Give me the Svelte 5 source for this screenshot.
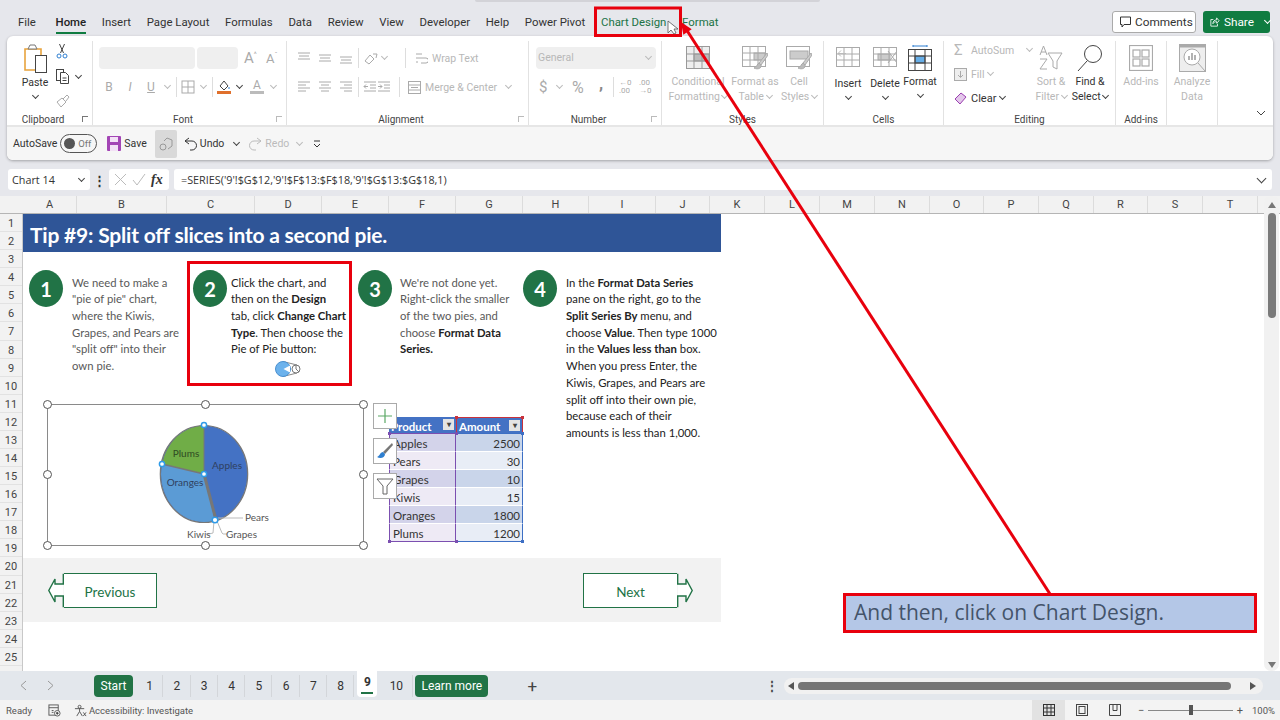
<script lang="ts">
	const tabs = ['File', 'Home', 'Insert', 'Page Layout', 'Formulas', 'Data', 'Review', 'View', 'Developer', 'Help', 'Power Pivot', 'Chart Design', 'Format'];
	const columns: [string, number][] = [['A', 54], ['B', 90], ['C', 88], ['D', 67], ['E', 67], ['F', 67], ['G', 67], ['H', 66], ['I', 67], ['J', 54], ['K', 55], ['L', 55], ['M', 55], ['N', 55], ['O', 54], ['P', 55], ['Q', 55], ['R', 54], ['S', 55], ['T', 55]];
	const rows = Array.from({ length: 25 }, (_, i) => i + 1);
	const sheets = ['1', '2', '3', '4', '5', '6', '7', '8', '9', '10'];
	const tableRows: [string, number][] = [['Apples', 2500], ['Pears', 30], ['Grapes', 10], ['Kiwis', 15], ['Oranges', 1800], ['Plums', 1200]];
	const vAlign = ['M1 2h12M2 5h10M1 8h12', 'M1 4h12M2 7h10M1 10h12', 'M1 6h12M2 9h10M1 12h12'];
	const hAlign = ['M1 2h12M1 5h8M1 8h12M1 11h8', 'M1 2h12M3 5h8M1 8h12M3 11h8', 'M1 2h12M5 5h8M1 8h12M5 11h8'];
	const rangeMarks: [number, number, string][] = [
		[0, 16, '#7b4fb0'], [67, 16, '#7b4fb0'], [0, 124, '#7b4fb0'], [67, 124, '#7b4fb0'],
		[67, 0, '#c8323c'], [133, 0, '#c8323c'], [133, 16, '#3d6fc4'], [133, 124, '#3d6fc4']
	];
</script>

<div class="app">
	<div class="title-sliver"></div>
	<nav class="tabs">
		{#each tabs as t}
			<span class="tab" class:first={t === 'File'} class:active={t === 'Home'} class:ctx={t === 'Chart Design' || t === 'Format'}>{t}</span>
		{/each}
		<div class="tab-actions">
			<button class="comments">
				<svg width="11" height="12" viewBox="0 0 11 12" fill="none" stroke="#333"><path d="M.5 1h10v7.500H4L2 11V8.500H.5z" /></svg>
				Comments
			</button>
			<button class="share">
				<svg width="12" height="12" viewBox="0 0 12 12" fill="none" stroke="#fff"><path d="M4 3H1v8h8V8M3.500 8c0-3 2-4.500 4.500-4.500V1l3 3.500L8 7.500V5.500C6 5.500 4.500 6.500 3.500 8z" /></svg>
				Share <span class="c share-caret"></span>
			</button>
		</div>
	</nav>

	<section class="ribbon-card">
		<div class="ribbon">
			<div class="group g-clip">
				<div class="g-body clip">
					<div class="paste">
						<svg width="24" height="30" viewBox="0 0 24 30" fill="none"><path d="M12 27H2V6h16v6" stroke="#e8a33d" stroke-width="1.6" /><path d="M5 6l2-4h5l2 4z" fill="#fff" stroke="#777" /><rect x="12.500" y="12.500" width="11" height="17" fill="#fff" stroke="#444" /></svg>
						<span class="paste-label">Paste</span>
						<span class="c dark"></span>
					</div>
					<div class="mini-col">
						<svg width="12" height="16" viewBox="0 0 12 16" fill="none" stroke="#444"><path d="M3.500 1l4 9M8.500 1l-4 9" /><circle cx="3" cy="13" r="2" stroke="#2f7fd0" /><circle cx="9" cy="13" r="2" stroke="#2f7fd0" /></svg>
						<span class="copy">
							<svg width="14" height="15" viewBox="0 0 14 15" fill="none" stroke="#444"><rect x=".5" y=".5" width="7" height="11" /><path d="M4.500 3.500h5l3 3v8h-8z" fill="#fff" /><path d="M6.500 9h4M6.500 11.500h4" /></svg>
							<span class="c dark"></span>
						</span>
						<svg width="14" height="14" viewBox="0 0 14 14" fill="none" stroke="#aaa"><path d="M1 8l4 5 5-5-4-4zM7 5l4-4 2 2-3 4" /></svg>
					</div>
				</div>
				<div class="g-label launch">Clipboard<i class="launcher"></i></div>
			</div>

			<div class="group g-font">
				<div class="g-body font-body">
					<div class="g-row">
						<span class="select w96"></span>
						<span class="select w41"></span>
						<span class="big-a">A<sup>^</sup></span>
						<span class="big-a small">A<sup>ˇ</sup></span>
					</div>
					<div class="font-row">
						<span>B</span><span class="ital">I</span><span class="und">U</span><span class="c"></span>
						<span class="vsep"></span>
						<svg width="14" height="14" viewBox="0 0 14 14" fill="none" stroke="#aaa"><rect x="1" y="1" width="12" height="12" /><path d="M7 1v12M1 7h12" /></svg>
						<span class="c"></span>
						<span class="vsep"></span>
						<span class="color-a"><svg width="14" height="11" viewBox="0 0 14 11" fill="none" stroke="#444"><path d="M3 6l4-5 4 5-4 4z" /><path d="M12 7v2" stroke="#2f7fd0" /></svg><em class="orange"></em></span>
						<span class="c dark"></span>
						<span class="color-a">A<em class="grey"></em></span>
						<span class="c"></span>
					</div>
				</div>
				<div class="g-label launch">Font<i class="launcher faint"></i></div>
			</div>

			<div class="group g-align">
				<div class="g-body align-body">
					<div class="g-row tight">
						{#each vAlign as d}
							<svg class="ic" width="14" height="14" viewBox="0 0 14 14" stroke="#aaa"><path {d} /></svg>
						{/each}
						<span class="vsep ml5"></span>
						<svg class="ml5" width="14" height="14" viewBox="0 0 14 14" fill="none" stroke="#aaa"><path d="M1 10l5-6 4 4-5 5zM9 3l4 0-1 4" /></svg>
						<span class="c ml4"></span>
						<span class="vsep ml18"></span>
						<svg class="ml9" width="13" height="14" viewBox="0 0 13 14" fill="none" stroke="#aaa"><path d="M1 3h6M1 7h10a2.500 2.500 0 010 5H6M1 11h2" /></svg>
						<span class="wrap-label">Wrap Text</span>
					</div>
					<div class="g-row tight">
						{#each hAlign as d}
							<svg class="ic" width="14" height="14" viewBox="0 0 14 14" stroke="#aaa"><path {d} /></svg>
						{/each}
						<span class="vsep ml5"></span>
						<svg class="ml4" width="14" height="14" viewBox="0 0 14 14" fill="none" stroke="#aaa"><path d="M1 2h12M7 5h6M7 8h6M1 11h12M5 6.500H1l2-2M1 6.500l2 2" /></svg>
						<svg class="ic" width="14" height="14" viewBox="0 0 14 14" fill="none" stroke="#aaa"><path d="M1 2h12M7 5h6M7 8h6M1 11h12M1 6.500h4l-2-2M5 6.500l-2 2" /></svg>
						<span class="vsep ml8"></span>
						<svg class="ml8" width="13" height="13" viewBox="0 0 13 13" fill="none" stroke="#aaa"><rect x=".5" y=".5" width="12" height="12" /><path d="M3 6.500h7M.5 4h12M.5 9h12" /></svg>
						<span class="wrap-label">Merge &amp; Center</span>
						<span class="c ml9"></span>
					</div>
				</div>
				<div class="g-label launch">Alignment<i class="launcher faint"></i></div>
			</div>

			<div class="group g-num">
				<div class="g-body num-body">
					<span class="general">General<span class="c"></span></span>
					<div class="num-row">
						<span class="dollar">$</span><span class="c ml6"></span><span class="pctsign">%</span><span class="comma">,</span>
						<span class="vsep ml8"></span>
						<span class="tiny ml5">←0<br />.00</span><span class="tiny ml6">.00<br />→0</span>
					</div>
				</div>
				<div class="g-label launch">Number<i class="launcher faint"></i></div>
			</div>

			<div class="group g-styles">
				<div class="g-body styles">
					<div class="big s1">
						<span class="ico"><svg width="24" height="25" viewBox="0 0 24 25" stroke="#999"><rect x=".5" y=".5" width="23" height="22" fill="#eee" /><rect x="8" y="8" width="15" height="7" fill="#bbb" /><path d="M.5 8h23M.5 15h23M8 .5v22M16 .5v22" fill="none" /></svg></span>
						<span>Conditional<br />Formatting <span class="c"></span></span>
					</div>
					<div class="big s2">
						<span class="ico"><svg width="26" height="25" viewBox="0 0 26 25" stroke="#aaa"><rect x=".5" y=".5" width="23" height="20" fill="none" /><rect x="12" y="7" width="11" height="7" fill="#ccc" /><path d="M.5 7h23M.5 14h23M8 .5v20M16 .5v20" fill="none" /><path d="M25 7l-8 10 2 2 7-10z" fill="#ccc" /><path d="M17 17c-2 1-2 4-5 5 4 2 8 0 7-3z" fill="#bbb" /></svg></span>
						<span>Format as<br />Table <span class="c"></span></span>
					</div>
					<div class="big s3">
						<span class="ico"><svg width="26" height="25" viewBox="0 0 26 25" stroke="#aaa"><rect x=".5" y=".5" width="23" height="20" fill="none" /><rect x="4" y="5" width="18" height="8" fill="#ccc" /><path d="M25 7l-8 10 2 2 7-10z" fill="#ccc" /><path d="M17 17c-2 1-2 4-5 5 4 2 8 0 7-3z" fill="#bbb" /></svg></span>
						<span>Cell<br />Styles <span class="c"></span></span>
					</div>
				</div>
				<div class="g-label">Styles</div>
			</div>

			<div class="group g-cells">
				<div class="g-body cells">
					<div class="big strong c1">
						<span class="ico low"><svg width="24" height="20" viewBox="0 0 24 20" fill="none" stroke="#aaa"><rect x=".5" y=".5" width="23" height="19" /><path d="M.5 7h23M.5 13h23M8 .5v19M16 .5v19" /><path d="M10 6.500H2l3-3M2 6.500l3 3" stroke="#bbb" /></svg></span>
						<span>Insert</span><span class="c dark ch"></span>
					</div>
					<div class="big strong c2">
						<span class="ico low"><svg width="24" height="20" viewBox="0 0 24 20" fill="none" stroke="#aaa"><rect x=".5" y=".5" width="23" height="19" /><rect x="5" y="7" width="12" height="6" fill="#ccc" /><path d="M8 .5v19M16 .5v19M.5 7h23M.5 13h23M15 4l9 12M24 4l-9 12" /></svg></span>
						<span>Delete</span><span class="c dark ch"></span>
					</div>
					<div class="big strong c3 up">
						<span class="ico"><svg width="24" height="26" viewBox="0 0 24 26" fill="none" stroke="#444"><path d="M5 1h14M5 0v2M19 0v2" stroke="#2f7fd0" /><rect x=".5" y="4.500" width="23" height="21" /><rect x="7" y="11" width="10" height="7" fill="#66aee8" /><path d="M.5 11h23M.5 18h23M7 4.500v21M17 4.500v21" /></svg></span>
						<span>Format</span><span class="c dark ch"></span>
					</div>
				</div>
				<div class="g-label">Cells</div>
			</div>

			<div class="group g-edit">
				<div class="g-body editing">
					<div class="edit-col">
						<span class="muted"><span class="sigma">Σ</span>AutoSum<span class="c ml9"></span></span>
						<span class="muted"><svg width="13" height="13" viewBox="0 0 13 13" fill="#eee" stroke="#aaa"><rect x=".5" y=".5" width="12" height="12" /><path d="M6.500 3v6M4 7l2.500 2.500L9 7" fill="none" /></svg>Fill <span class="c"></span></span>
						<span class="strong-line"><svg width="13" height="13" viewBox="0 0 13 13" fill="#e3c7ea" stroke="#9a3fb0"><path d="M1 7l6-6 5 4-6 7z" /></svg>Clear <span class="c dark"></span></span>
					</div>
					<div class="big up e1">
						<span class="ico"><svg width="24" height="26" viewBox="0 0 24 26" fill="none" stroke="#aaa"><path d="M1 10L4.500 1 8 10M2 7h5M1 14h7l-7 10h7M9 8h14l-5 8v8l-4-2v-6z" /></svg></span>
						<span>Sort &amp;<br />Filter <span class="c"></span></span>
					</div>
					<div class="big strong up e2">
						<span class="ico"><svg width="26" height="28" viewBox="0 0 26 28" fill="none" stroke="#444"><circle cx="16" cy="10" r="8.500" /><path d="M10 17L1 27" /></svg></span>
						<span>Find &amp;<br />Select <span class="c dark"></span></span>
					</div>
				</div>
				<div class="g-label">Editing</div>
			</div>

			<div class="group g-small">
				<div class="g-body"><div class="big up solo">
					<span class="ico"><svg width="24" height="26" viewBox="0 0 24 26" fill="none" stroke="#aaa" stroke-width="1.200"><rect x=".5" y=".5" width="23" height="25" /><rect x="4" y="5" width="7" height="7" /><rect x="13" y="5" width="7" height="7" /><rect x="4" y="14" width="7" height="7" /><rect x="13" y="14" width="7" height="7" /></svg></span>
					<span>Add-ins</span>
				</div></div>
				<div class="g-label">Add-ins</div>
			</div>

			<div class="group g-small">
				<div class="g-body"><div class="big up solo">
					<span class="ico"><svg width="27" height="30" viewBox="0 0 27 30" fill="#eee" stroke="#aaa"><rect x=".5" y="1.500" width="26" height="27" /><path d="M.5 3h26" stroke-width="3" /><circle cx="13" cy="14" r="8" fill="#fff" /><path d="M10 17v-4M13 17v-7M16 17v-5" stroke="#999" stroke-width="1.500" /><path d="M19 20l7 8" fill="none" /></svg></span>
					<span>Analyze<br />Data</span>
				</div></div>
				<div class="g-label"></div>
			</div>
			<svg class="collapse" width="10" height="6" viewBox="0 0 10 6" fill="none" stroke="#444"><path d="M1 1l4 4 4-4" /></svg>
		</div>

		<div class="qat">
			<span>AutoSave</span>
			<span class="toggle ml3"><i></i>Off</span>
			<svg class="ml10" width="14" height="15" viewBox="0 0 14 15"><rect width="14" height="15" rx="1" fill="#a345b5" /><rect x="3" y="1" width="8" height="5" fill="#f3e1f6" /><rect x="3" y="9" width="8" height="6" fill="#f3e1f6" /></svg>
			<span class="ml3">Save</span>
			<span class="qat-shape ml8"><svg width="14" height="14" viewBox="0 0 14 14" fill="none" stroke="#999"><path d="M5 4l3-3 5 2v6l-4 3" /><circle cx="4" cy="10" r="3" /></svg></span>
			<svg class="ml7" width="13" height="14" viewBox="0 0 13 14" fill="none" stroke="#333"><path d="M1 4l4-3M1 4l4 3M1 4h7a4 4 0 010 9H6" /></svg>
			<span class="ml3">Undo</span><span class="c dark ml10"></span>
			<svg class="ml10" width="13" height="14" viewBox="0 0 13 14" fill="none" stroke="#bbb"><path d="M12 4L8 1M12 4L8 7M12 4H5a4 4 0 000 9h2" /></svg>
			<span class="off ml3">Redo</span><span class="c ml8"></span>
			<svg class="ml11" width="8" height="8" viewBox="0 0 8 8" fill="none" stroke="#333"><path d="M1 1h6M1 4l3 3 3-3" /></svg>
		</div>
	</section>

	<div class="formula-bar">
		<span class="name-box">Chart 14<span class="c dark"></span></span>
		<span class="fdots">⋮</span>
		<span class="fx">
			<svg width="13" height="13" viewBox="0 0 13 13" stroke="#bbb" fill="none"><path d="M1 1l11 11M12 1L1 12" /></svg>
			<svg width="14" height="13" viewBox="0 0 14 13" stroke="#bbb" fill="none"><path d="M1 7l4 5 8-11" /></svg>
			<em>fx</em>
		</span>
		<span class="formula">=SERIES('9'!$G$12,'9'!$F$13:$F$18,'9'!$G$13:$G$18,1)<span class="c dark big-c"></span></span>
	</div>

	<div class="workbook">
		<div class="col-head">
			<span class="corner"></span>
			{#each columns as [name, w]}
				<span class="col" style="width:{w}px">{name}</span>
			{/each}
		</div>
		<div class="sheet-wrap">
			<div class="row-head">
				{#each rows as r}<span>{r}</span>{/each}
			</div>
			<div class="sheet">
				<h1 class="banner">Tip #9: Split off slices into a second pie.</h1>
				<div class="steps">
					<div class="step s-one"><span class="num">1</span><p>We need to make a "pie of pie" chart, where the Kiwis, Grapes, and Pears are "split off" into their own pie.</p></div>
					<div class="step s-two"><span class="num">2</span><div><p class="dark">Click the chart, and then on the <b>Design</b><br />tab, click <b>Change Chart Type</b>. Then choose the Pie of Pie button:</p>
						<svg class="pop" width="26" height="16" viewBox="0 0 26 16" fill="none"><path d="M8 .5l14 3.500M8 15.500l14-3.500" stroke="#888" /><circle cx="21" cy="8" r="4" fill="#fff" stroke="#777" /><path d="M21 8V4M21 8l3 3" stroke="#777" /><circle cx="8" cy="8" r="7.500" fill="#6cb2ec" stroke="#4a90d0" /><path d="M8.500 8l6.500-3.500v7z" fill="#fff" /></svg>
					</div></div>
					<div class="step s-three"><span class="num">3</span><p>We're not done yet. Right-click the smaller of the two pies, and choose <b>Format Data Series.</b></p></div>
					<div class="step s-four"><span class="num">4</span><p class="dark">In the <b>Format Data Series</b> pane on the right, go to the <b>Split Series By</b> menu, and choose <b>Value</b>. Then type 1000 in the <b>Values less than</b> box. When you press Enter, the Kiwis, Grapes, and Pears are split off into their own pie, because each of their<br />amounts is less than 1,000.</p></div>
				</div>

				<div class="chart-row">
					<div class="chart">
						<svg width="315" height="140" viewBox="1 1 315 140">
							<g transform="translate(157 70)">
								<ellipse rx="43.700" ry="48.500" fill="#4472c4" />
								<path d="M0 0V-48.500A43.700 48.500 0 0 0 -42 -10Z" fill="#70ad47" />
								<path d="M0 0L-42 -10A43.700 48.500 0 0 0 11 47Z" fill="#5b9bd5" />
								<path d="M0 0L12 46" stroke="#777" stroke-width="3" />
								<path d="M0 0L-42 -10" stroke="#777" stroke-width="1.400" />
								<path d="M0 0V-48.500" stroke="#777" stroke-width="1" />
								<ellipse rx="43.700" ry="48.500" fill="none" stroke="#777" stroke-width="1.200" />
							</g>
							<path d="M171 114h25M167 117l-1 12-4 1h-3M170 117l5 12 1 1h4" fill="none" stroke="#bbb" />
							<circle cx="157" cy="70" r="2.600" fill="#fff" stroke="#2f9be8" stroke-width="1.500" />
							<circle cx="157" cy="21" r="2.600" fill="#fff" stroke="#2f9be8" stroke-width="1.500" />
							<circle cx="115" cy="60" r="2.600" fill="#fff" stroke="#2f9be8" stroke-width="1.500" />
							<circle cx="168" cy="116" r="2.800" fill="#fff" stroke="#2f9be8" stroke-width="1.500" />
							<text x="180" y="65" class="on-pie" text-anchor="middle">Apples</text>
							<text x="139" y="53" class="on-pie2" text-anchor="middle">Plums</text>
							<text x="138" y="82" class="on-pie" text-anchor="middle">Oranges</text>
							<text x="198" y="117" class="lbl">Pears</text>
							<text x="140" y="134" class="lbl">Kiwis</text>
							<text x="179" y="134" class="lbl">Grapes</text>
						</svg>
						{#each ['tl', 'tc', 'tr', 'ml', 'mr', 'bl', 'bc', 'br'] as h}<i class="handle {h}"></i>{/each}
					</div>
					<div class="chart-tools">
						<span><svg width="16" height="16" viewBox="0 0 16 16" stroke="#5aa865" stroke-width="1.200"><path d="M8 1v14M1 8h14" /></svg></span>
						<span><svg width="18" height="18" viewBox="0 0 18 18"><path d="M16 1L7 10l2 2 8-9z" fill="#777" /><path d="M7 10c-3 0-3 4-6 5 3 2 8 1 8-3z" fill="#2f7fd0" /></svg></span>
						<span><svg width="18" height="18" viewBox="0 0 18 18" fill="none" stroke="#666"><path d="M1 2h16l-6 7v8H7V9z" /></svg></span>
					</div>
					<div class="table-wrap">
						<table>
							<thead><tr><th class="t-prod">Product<i>▾</i></th><th class="t-amt">Amount<i>▾</i></th></tr></thead>
							<tbody>
								{#each tableRows as [name, amount]}
									<tr><td class="p">{name}</td><td class="n">{amount}</td></tr>
								{/each}
							</tbody>
						</table>
						{#each rangeMarks as [x, y, color]}
							<i class="mark" style="left:{x - 1.500}px;top:{y - 1.500}px;background:{color}"></i>
						{/each}
					</div>
				</div>

				<div class="nav-band">
					<div class="nav-btn">
						<svg width="16" height="35" viewBox="0 0 16 35" fill="#fff" stroke="#217346" stroke-width="1.400"><path d="M15.300.7V11H7V6L.8 17.500 7 29v-6h8.300v11.300" /></svg>
						<span class="nav-body left">Previous</span>
					</div>
					<div class="nav-btn">
						<span class="nav-body right">Next</span>
						<svg width="16" height="35" viewBox="0 0 16 35" fill="#fff" stroke="#217346" stroke-width="1.400"><path d="M.7.700V11H9V6l6.200 11.500L9 29v-6H.7v11.300" /></svg>
					</div>
				</div>
			</div>
		</div>

		<div class="v-scroll">
			<svg width="8" height="6" viewBox="0 0 8 6"><path d="M4 0l4 6H0z" fill="#777" /></svg>
			<i></i>
			<svg class="down" width="8" height="6" viewBox="0 0 8 6"><path d="M4 6L8 0H0z" fill="#777" /></svg>
		</div>

		<div class="sheet-tabs">
			<svg class="arrow" width="7" height="11" viewBox="0 0 7 11" fill="none" stroke="#999"><path d="M6 1L1 5.500 6 10" /></svg>
			<svg class="arrow" width="7" height="11" viewBox="0 0 7 11" fill="none" stroke="#999"><path d="M1 1l5 4.500L1 10" /></svg>
			<span class="pill start">Start</span>
			{#each sheets as s}
				<span class="sheet-tab" class:current={s === '9'} class:ten={s === '10'}>{s}</span>
			{/each}
			<span class="pill more">Learn more</span>
			<span class="plus">+</span>
			<span class="sdots">⋮</span>
			<div class="h-scroll">
				<svg width="6" height="8" viewBox="0 0 6 8"><path d="M0 4l6-4v8z" fill="#555" /></svg>
				<i></i>
				<svg width="6" height="8" viewBox="0 0 6 8"><path d="M6 4L0 0v8z" fill="#555" /></svg>
			</div>
		</div>
	</div>

	<footer class="status">
		<span>Ready</span>
		<svg width="13" height="13" viewBox="0 0 14 14" fill="none" stroke="#555"><rect x="1" y="1" width="10" height="11" /><path d="M1 4h10M4 7h2M4 9h2" /><circle cx="10" cy="10" r="3" fill="#fff" /><circle cx="10" cy="10" r="1" fill="#333" /></svg>
		<span class="acc"><svg width="13" height="13" viewBox="0 0 14 14" fill="none" stroke="#555"><circle cx="6" cy="3" r="1.600" /><path d="M1 5h10M6 5v3l-3 5M6 8l3 5M10 9l3 4M13 9l-3 4" /></svg>Accessibility: Investigate</span>
		<div class="views">
			<span class="view on"><svg width="12" height="12" viewBox="0 0 12 12" fill="none" stroke="#333"><rect x=".5" y=".5" width="11" height="11" /><path d="M4 .5v11M8 .5v11M.5 4h11M.5 8h11" /></svg></span>
			<span class="view"><svg width="12" height="12" viewBox="0 0 12 12" fill="none" stroke="#444"><rect x=".5" y=".5" width="11" height="11" /><rect x="3" y="2.500" width="6" height="7" /></svg></span>
			<span class="view"><svg width="12" height="12" viewBox="0 0 12 12" fill="none" stroke="#444"><path d="M.5.5h11v11H.5zM4 .5v6h4v-6" /></svg></span>
		</div>
		<div class="zoom"><span>−</span><div class="zoom-track"><i></i></div><span>+</span></div>
		<span class="pct">100%</span>
	</footer>

	<!-- tutorial annotations drawn on top of the window -->
	<svg class="annot" width="1280" height="720" viewBox="0 0 1280 720">
		<path d="M1050 594L686 29" stroke="#e8000d" stroke-width="3" fill="none" />
		<path d="M681 22l10.700 7.300-8.400 5.400z" fill="#e8000d" />
		<rect x="595.500" y="8" width="85" height="27.500" fill="none" stroke="#e8000d" stroke-width="3" />
		<rect x="188.500" y="262.500" width="162" height="122" fill="none" stroke="#e8000d" stroke-width="3" />
		<path d="M668 21l0 12 3-3 3 4 2-1-2-4h4z" fill="#fff" stroke="#555" stroke-width=".8" />
	</svg>
	<div class="callout">And then, click on Chart Design.</div>
</div>

<style>
	:global(body) {
		margin: 0;
		background: #e6e7ec;
	}

	.app {
		position: relative;
		width: 1280px;
		height: 720px;
		overflow: hidden;
		background: #e6e7ec;
		font-family: Roboto, 'Noto Sans', sans-serif;
		font-size: 12px;
		color: #333;
		display: flex;
		flex-direction: column;
	}

	.title-sliver {
		position: absolute;
		left: 475px;
		top: 0;
		width: 345px;
		height: 2px;
		background: #d3d3d8;
		border-radius: 0 0 3px 3px;
	}

	.ml3 { margin-left: 3px; }
	.ml4 { margin-left: 4px; }
	.ml5 { margin-left: 5px; }
	.ml6 { margin-left: 6px; }
	.ml7 { margin-left: 7px; }
	.ml8 { margin-left: 8px; }
	.ml9 { margin-left: 9px; }
	.ml10 { margin-left: 10px; }
	.ml11 { margin-left: 11px; }
	.ml18 { margin-left: 18px; }

	.tabs {
		height: 36px;
		flex: none;
		display: flex;
		align-items: flex-start;
		padding: 8px 0 0 18px;
		gap: 15.700px;
		box-sizing: border-box;
	}

	.tab {
		position: relative;
		height: 28px;
		font-size: 11.400px;
		color: #333;
		line-height: 28px;
		white-space: nowrap;
	}

	.tab.first {
		margin-right: 4px;
	}

	.tab.active {
		font-weight: 500;
		color: #222;
	}

	.tab.active::after {
		content: '';
		position: absolute;
		left: 0;
		right: 0;
		bottom: 2px;
		height: 2px;
		background: #107c41;
	}

	.tab.ctx {
		color: #217346;
	}

	.tab-actions {
		margin-left: auto;
		display: flex;
		gap: 7px;
		margin-right: 10px;
		margin-top: 3px;
	}

	button {
		font: inherit;
		height: 22px;
		border-radius: 3px;
		display: flex;
		align-items: center;
		gap: 4px;
		padding: 0 0 0 7px;
		font-size: 11.800px;
	}

	.comments {
		width: 84px;
		background: #fff;
		border: 1px solid #aaa;
		color: #333;
	}

	.share {
		width: 67px;
		background: #107c41;
		border: 0;
		color: #fff;
	}

	.c.share-caret {
		margin-left: 7px;
	}

	.ribbon-card {
		margin: 0 7px;
		height: 124px;
		flex: none;
		background: #fff;
		border-radius: 6px;
		box-shadow: 0 1px 3px rgba(0, 0, 0, 0.3);
		overflow: hidden;
		display: flex;
		flex-direction: column;
	}

	.ribbon {
		height: 91px;
		flex: none;
		position: relative;
		display: flex;
		padding-top: 5px;
		box-sizing: border-box;
		border-bottom: 2px solid #e6e6e6;
		font-size: 10.5px;
	}

	.group {
		display: flex;
		flex-direction: column;
		border-right: 1px solid #e2e2e2;
		box-sizing: border-box;
	}

	.g-clip { width: 86px; }
	.g-font { width: 194px; }
	.g-align { width: 242px; }
	.g-num { width: 133px; }
	.g-styles { width: 162px; }
	.g-cells { width: 120px; }
	.g-edit { width: 172px; }
	.g-small { width: 51px; }

	.g-body {
		flex: 1;
		min-height: 0;
		display: flex;
	}

	.g-label {
		position: relative;
		height: 13px;
		font-size: 10px;
		line-height: 15px;
		text-align: center;
		color: #444;
	}

	.g-label.launch {
		padding-right: 13px;
	}

	.launcher {
		position: absolute;
		right: 4px;
		top: 4px;
		width: 5px;
		height: 5px;
		border-left: 1px solid #777;
		border-top: 1px solid #777;
	}

	.launcher.faint {
		border-color: #bbb;
	}

	/* chevron used all over the ribbon */
	.c {
		display: inline-block;
		flex: none;
		width: 4px;
		height: 4px;
		border-right: 1px solid #bbb;
		border-bottom: 1px solid #bbb;
		transform: rotate(45deg);
		margin-top: -3px;
		vertical-align: 2px;
	}

	.c.dark {
		border-color: #444;
	}

	.c.share-caret {
		border-color: #fff;
	}

	.c.big-c {
		width: 6px;
		height: 6px;
	}

	.clip {
		padding-left: 13px;
	}

	.paste {
		display: flex;
		flex-direction: column;
		align-items: center;
		width: 30px;
		padding-top: 2px;
	}

	.paste-label {
		margin-top: 3px;
		line-height: 14px;
		margin-bottom: 6px;
		color: #333;
	}

	.mini-col {
		display: flex;
		flex-direction: column;
		gap: 10px;
		padding-top: 2px;
		padding-left: 6px;
	}

	.copy {
		display: flex;
		align-items: center;
		gap: 6px;
	}

	.font-body {
		flex-direction: column;
		padding: 6px 0 0 6px;
		gap: 7px;
	}

	.g-row {
		display: flex;
		align-items: center;
		color: #aaa;
		height: 22px;
	}

	.font-row {
		display: grid;
		grid-template-columns: 20px 22px 20px 12px 6px 17px 14px 4px 20px 10px 26px 6px;
		justify-items: center;
		align-items: center;
		height: 22px;
		color: #aaa;
		font-size: 12px;
	}

	.ital {
		font-style: italic;
	}

	.und {
		text-decoration: underline;
	}

	.vsep {
		display: block;
		flex: none;
		width: 1px;
		height: 20px;
		background: #ddd;
	}

	.select {
		height: 22px;
		border-radius: 4px;
		background: #efefef;
		display: block;
		margin-right: 2px;
	}

	.w96 { width: 96px; }
	.w41 { width: 41px; }

	.big-a {
		font-size: 15px;
		color: #aaa;
		margin-left: 4px;
		width: 18px;
	}

	.big-a.small {
		font-size: 13px;
	}

	.big-a sup {
		font-size: 7px;
	}

	.color-a {
		display: flex;
		flex-direction: column;
		align-items: center;
		width: 14px;
		line-height: 11px;
	}

	.color-a em {
		display: block;
		width: 14px;
		height: 3px;
	}

	.orange { background: #e0702c; }
	.grey { background: #bbb; }

	.align-body {
		flex-direction: column;
		padding: 6px 0 0 10px;
		gap: 7px;
	}

	.ic + .ic {
		margin-left: 7px;
	}

	.wrap-label {
		color: #b8b8b8;
		margin-left: 4px;
		white-space: nowrap;
	}

	.num-body {
		flex-direction: column;
		padding: 6px 0 0 7px;
		gap: 7px;
	}

	.general {
		width: 120px;
		height: 22px;
		border-radius: 4px;
		background: #efefef;
		color: #b8b8b8;
		line-height: 22px;
		padding: 0 5px 0 2px;
		box-sizing: border-box;
		display: flex;
		justify-content: space-between;
		align-items: center;
	}

	.num-row {
		display: flex;
		align-items: center;
		height: 22px;
		color: #aaa;
	}

	.dollar {
		width: 12px;
		margin-left: 3px;
		font-size: 15px;
	}

	.pctsign {
		width: 18px;
		margin-left: 10px;
		font-size: 16px;
	}

	.comma {
		font-weight: 700;
		font-size: 17px;
		width: 6px;
		margin: -8px 0 0 9px;
		color: #888;
	}

	.tiny {
		font-size: 8px;
		line-height: 8px;
		width: 14px;
		white-space: nowrap;
	}

	.big {
		display: flex;
		flex: none;
		flex-direction: column;
		align-items: center;
		text-align: center;
		padding-top: 5px;
		line-height: 15px;
		color: #b8b8b8;
		white-space: nowrap;
		box-sizing: border-box;
	}

	.big.strong {
		color: #333;
	}

	.big.up {
		padding-top: 1px;
	}

	.ico {
		height: 27.5px;
		display: flex;
		align-items: flex-start;
		justify-content: center;
	}

	.big.up .ico {
		height: 31.500px;
		align-items: center;
	}

	.ico.low {
		height: 28.500px;
	}

	.cells {
		padding-left: 6px;
	}

	.cells .big {
		padding-top: 6px;
	}

	.cells .big.up {
		padding-top: 1px;
	}

	.ch {
		margin-top: 3px;
	}

	.s1 { width: 72px; }
	.s2 { width: 42px; }
	.s3 { width: 46px; }
	.c1 { width: 36px; }
	.c2 { width: 38px; }
	.c3 { width: 32px; }
	.e1 { width: 30px; }
	.e2 { width: 48px; }

	.editing {
		padding-left: 10px;
	}

	.edit-col {
		display: flex;
		flex-direction: column;
		gap: 6px;
		width: 82px;
		flex: none;
		white-space: nowrap;
	}

	.edit-col > span {
		display: flex;
		align-items: center;
		gap: 4px;
		height: 18px;
	}

	.muted {
		color: #b8b8b8;
	}

	.strong-line {
		color: #333;
		font-size: 11px;
	}

	.sigma {
		font-size: 15px;
		width: 13px;
	}

	.solo {
		width: 100%;
	}

	.collapse {
		position: absolute;
		right: 7px;
		bottom: 9px;
	}

	.qat {
		flex: 1;
		background: #f6f6f6;
		display: flex;
		align-items: center;
		padding-left: 6px;
		font-size: 10.500px;
		color: #333;
	}

	.toggle {
		box-sizing: border-box;
		width: 37px;
		height: 19px;
		border: 1px solid #555;
		border-radius: 10px;
		display: flex;
		align-items: center;
		justify-content: flex-end;
		padding-right: 5px;
		font-size: 9.500px;
		color: #777;
		position: relative;
	}

	.toggle i {
		position: absolute;
		left: 3px;
		top: 3px;
		width: 11px;
		height: 11px;
		border-radius: 50%;
		background: #555;
	}

	.qat-shape {
		width: 22px;
		height: 28px;
		background: #d9d9d9;
		display: flex;
		align-items: center;
		justify-content: center;
		border-radius: 2px;
	}

	.off {
		color: #bbb;
	}

	.formula-bar {
		height: 21px;
		margin: 9px 8px 6px;
		flex: none;
		display: flex;
		align-items: center;
		font-family: 'Open Sans', sans-serif;
	}

	.formula-bar > span {
		height: 21px;
		background: #fff;
		border-radius: 3px;
		display: flex;
		align-items: center;
		box-sizing: border-box;
	}

	.name-box {
		width: 82px;
		padding: 0 6px 0 4px;
		justify-content: space-between;
		font-size: 10.800px;
	}

	.formula-bar > .fdots {
		width: 19px;
		background: none;
		font-weight: 700;
		justify-content: center;
		font-size: 13px;
	}

	.fx {
		width: 60px;
		padding: 0 5px;
		gap: 5px;
		flex: none;
	}

	.fx em {
		font-family: 'Liberation Serif', serif;
		font-weight: 700;
		font-size: 14px;
		color: #333;
	}

	.formula {
		flex: 1;
		margin-left: 5px;
		padding: 0 7px 0 7px;
		justify-content: space-between;
		font-size: 10.800px;
	}

	.workbook {
		flex: 1;
		min-height: 0;
		display: flex;
		flex-direction: column;
		background: #fff;
		position: relative;
	}

	.col-head {
		height: 18px;
		flex: none;
		display: flex;
		background: #f2f2f2;
		border-bottom: 1px solid #b5b5b5;
		box-sizing: border-box;
	}

	.corner {
		width: 23px;
		flex: none;
	}

	.col {
		flex: none;
		box-sizing: border-box;
		text-align: center;
		font-size: 11px;
		line-height: 18px;
		color: #444;
		border-right: 1px solid #dcdcdc;
	}

	.sheet-wrap {
		flex: 1;
		min-height: 0;
		display: flex;
	}

	.row-head {
		width: 23px;
		flex: none;
		background: #f2f2f2;
		border-right: 1px solid #c8c8c8;
		box-sizing: border-box;
		overflow: hidden;
	}

	.row-head span {
		display: block;
		height: 18.080px;
		line-height: 19px;
		box-sizing: border-box;
		text-align: center;
		font-size: 11px;
		color: #444;
		border-bottom: 1px solid #e2e2e2;
	}

	.sheet {
		width: 698px;
		flex: none;
		display: flex;
		flex-direction: column;
		font-family: Lato, 'Open Sans', sans-serif;
	}

	.banner {
		margin: 0;
		height: 38px;
		background: #2f5597;
		color: #fff;
		font-size: 21px;
		letter-spacing: -0.2px;
		font-weight: 700;
		line-height: 41px;
		padding-left: 7px;
		white-space: nowrap;
	}

	.steps {
		display: grid;
		grid-template-columns: 165px 165px 165px 1fr;
		align-items: start;
		height: 134px;
		padding-top: 18px;
	}

	.step {
		display: flex;
		padding-left: 5px;
	}

	.s-one { padding-left: 6px; gap: 9px; }
	.s-one p { width: 112px; }
	.s-two { gap: 4px; }
	.s-two p { width: 117px; }
	.s-three { gap: 8px; }
	.s-three p { width: 112px; }
	.s-four { gap: 9px; position: relative; z-index: 1; }
	.s-four p { width: 152px; }

	.num {
		flex: none;
		width: 34px;
		height: 37px;
		border-radius: 50%;
		background: #217346;
		color: #fff;
		font-size: 20px;
		font-weight: 700;
		display: flex;
		align-items: center;
		justify-content: center;
	}

	.step p {
		margin: 4.600px 0 0;
		font-size: 11.300px;
		line-height: 16.700px;
		color: #595959;
	}

	.step p.dark {
		color: #222;
	}

	.step p b {
		color: #222;
		font-weight: 700;
	}

	.pop {
		display: block;
		margin: 3px 0 0 44px;
	}

	.chart-row {
		display: flex;
		height: 154px;
		padding-left: 24px;
		position: relative;
	}

	.chart {
		position: relative;
		width: 315px;
		height: 140px;
		border: 1px solid #8a8a8a;
		flex: none;
	}

	.chart svg {
		display: block;
		overflow: visible;
	}

	.on-pie {
		font: 10px Lato, sans-serif;
		fill: #2f3f5e;
	}

	.on-pie2 {
		font: 10px Lato, sans-serif;
		fill: #2e4a22;
	}

	.lbl {
		font: 10px Lato, sans-serif;
		fill: #555;
	}

	.handle {
		position: absolute;
		width: 7px;
		height: 7px;
		border: 1.500px solid #555;
		border-radius: 50%;
		background: #fff;
	}

	.tl { left: -5px; top: -5px; }
	.tc { left: 153px; top: -5px; }
	.tr { right: -5px; top: -5px; }
	.ml { left: -5px; top: 65px; }
	.mr { right: -5px; top: 65px; }
	.bl { left: -5px; bottom: -5px; }
	.bc { left: 153px; bottom: -5px; }
	.br { right: -5px; bottom: -5px; }

	.chart-tools {
		position: absolute;
		left: 350px;
		top: -1px;
		display: flex;
		flex-direction: column;
		gap: 9px;
		z-index: 2;
	}

	.chart-tools span {
		box-sizing: border-box;
		width: 24px;
		height: 26px;
		background: #fff;
		border: 1px solid #aaa;
		display: flex;
		align-items: center;
		justify-content: center;
	}

	.table-wrap {
		position: relative;
		margin-left: 25px;
		margin-top: 13px;
		align-self: flex-start;
	}

	table {
		width: 134px;
		border-collapse: separate;
		border-spacing: 0;
		font-size: 11.500px;
		color: #333;
		table-layout: fixed;
	}

	th {
		height: 16px;
		box-sizing: border-box;
		background: #4472c4;
		color: #fff;
		font-weight: 700;
		font-size: 11.500px;
		text-align: left;
		padding: 2px 2px 0;
		position: relative;
		border-bottom: 1.500px solid #7b4fb0;
		line-height: 13px;
	}

	th i {
		position: absolute;
		right: 2px;
		top: 2px;
		width: 11px;
		height: 11px;
		background: #e4e4e4;
		color: #444;
		font-style: normal;
		font-size: 8px;
		line-height: 11px;
		text-align: center;
	}

	.t-amt {
		border: 1.500px solid #c8323c;
		border-bottom-color: #3d6fc4;
	}

	td {
		height: 18px;
		box-sizing: border-box;
		padding: 3px 2px 0 3px;
		border-bottom: 1px solid #fff;
		line-height: 14px;
	}

	td.p {
		border-left: 1.500px solid #7b4fb0;
		border-right: 1.500px solid #7b4fb0;
	}

	td.n {
		text-align: right;
		border-right: 1.500px solid #3d6fc4;
	}

	tr:nth-child(odd) td.p { background: #d3d3ea; }
	tr:nth-child(even) td.p { background: #eeeaf5; }
	tr:nth-child(odd) td.n { background: #c9d5ea; }
	tr:nth-child(even) td.n { background: #e8edf6; }

	tr:last-child td.p { border-bottom: 1.500px solid #7b4fb0; }
	tr:last-child td.n { border-bottom: 1.500px solid #3d6fc4; }

	.mark {
		position: absolute;
		width: 3px;
		height: 3px;
	}

	.nav-band {
		height: 64px;
		background: #f2f2f2;
		display: flex;
		justify-content: space-between;
		align-items: flex-start;
		padding: 15px 28px 0 25px;
		box-sizing: border-box;
	}

	.nav-btn {
		display: flex;
		align-items: flex-start;
	}

	.nav-btn svg {
		flex: none;
		display: block;
	}

	.nav-body {
		box-sizing: border-box;
		width: 94px;
		height: 35px;
		background: #fff;
		border: 1.400px solid #217346;
		color: #217346;
		font-size: 13.500px;
		text-align: center;
		line-height: 36px;
	}

	.nav-body.left {
		border-left: 0;
		width: 93px;
	}

	.nav-body.right {
		border-right: 0;
	}

	.v-scroll {
		position: absolute;
		right: 1px;
		top: 0;
		bottom: 29px;
		width: 15px;
		background: #f1f1f1;
		border-radius: 7px;
		display: flex;
		flex-direction: column;
		align-items: center;
		padding-top: 6px;
		box-sizing: border-box;
	}

	.v-scroll i {
		width: 8px;
		height: 105px;
		background: #7a7a7a;
		border-radius: 4px;
		margin-top: 5px;
	}

	.v-scroll .down {
		margin-top: auto;
		margin-bottom: 3px;
	}

	.sheet-tabs {
		height: 29px;
		flex: none;
		background: #e3e7ec;
		display: flex;
		align-items: center;
		position: relative;
		padding-left: 20px;
		font-size: 12px;
	}

	.arrow {
		flex: none;
		margin-right: 20px;
	}

	.pill {
		background: #217346;
		color: #fff;
		border-radius: 4px;
		height: 22px;
		line-height: 23px;
		text-align: center;
	}

	.start {
		width: 39px;
		margin-left: 20px;
		margin-right: 3px;
	}

	.sheet-tab {
		width: 27.300px;
		text-align: center;
		line-height: 22px;
		color: #333;
		height: 22px;
		box-shadow: inset -1px 0 0 #d3d6da;
	}

	.sheet-tab.current {
		width: 20px;
		height: 26px;
		background: #fff;
		font-weight: 700;
		line-height: 22px;
		border-radius: 0 0 4px 4px;
		box-shadow: none;
		position: relative;
		margin: -3px 2px 0 3px;
	}

	.sheet-tab.current::after {
		content: '';
		position: absolute;
		left: 4px;
		right: 4px;
		bottom: 3px;
		height: 2px;
		background: #217346;
	}

	.sheet-tab.ten {
		width: 34px;
		margin-right: 2px;
	}

	.more {
		width: 73px;
	}

	.plus {
		margin-left: 39px;
		font-size: 17px;
		color: #444;
	}

	.sdots {
		position: absolute;
		left: 766px;
		font-weight: 700;
		color: #444;
	}

	.h-scroll {
		position: absolute;
		left: 784px;
		top: 7px;
		width: 479px;
		height: 16px;
		background: #f1f1f1;
		border-radius: 8px;
		display: flex;
		align-items: center;
		padding: 0 7px 0 4px;
		box-sizing: border-box;
	}

	.h-scroll i {
		flex: none;
		width: 433px;
		height: 8px;
		border-radius: 4px;
		background: #757575;
		margin: 0 auto 0 4px;
	}

	.status {
		height: 20px;
		flex: none;
		background: #f3f3f3;
		display: flex;
		align-items: center;
		padding: 0 7px 0 6px;
		font-size: 9.500px;
		color: #555;
	}

	.status > svg {
		margin-left: 16px;
	}

	.acc {
		display: flex;
		align-items: center;
		gap: 2px;
		margin-left: 13px;
	}

	.views {
		margin-left: auto;
		display: flex;
		align-self: stretch;
	}

	.view {
		width: 33px;
		display: flex;
		align-items: center;
		justify-content: center;
	}

	.view.on {
		background: #e2e2e2;
	}

	.zoom {
		width: 110px;
		display: flex;
		align-items: center;
		gap: 4px;
		margin-left: 4px;
		font-size: 11px;
		box-sizing: border-box;
		padding: 0 2px 0 3px;
	}

	.zoom-track {
		flex: 1;
		height: 1px;
		background: #888;
		position: relative;
	}

	.zoom-track i {
		position: absolute;
		left: 41px;
		top: -5px;
		width: 4px;
		height: 10px;
		background: #555;
	}

	.pct {
		width: 21px;
		margin-left: 7px;
		white-space: nowrap;
	}

	.annot {
		position: absolute;
		left: 0;
		top: 0;
		pointer-events: none;
		z-index: 5;
	}

	.callout {
		position: absolute;
		left: 843px;
		top: 593px;
		width: 414px;
		height: 40px;
		box-sizing: border-box;
		background: #b4c7e7;
		border: 3px solid #e8000d;
		color: #44546a;
		font-family: 'Open Sans', sans-serif;
		font-size: 21px;
		line-height: 33px;
		padding-left: 8px;
		z-index: 6;
	}
</style>
